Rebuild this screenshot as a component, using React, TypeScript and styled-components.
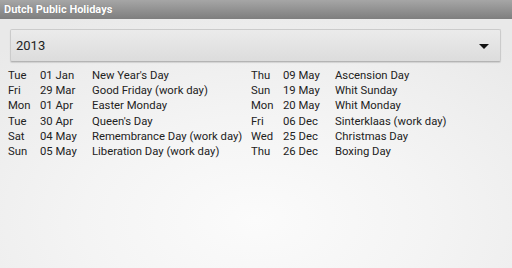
import React from "react";
import styled, { createGlobalStyle } from "styled-components";

const Global = createGlobalStyle`
  html, body { margin: 0; padding: 0; }
  body {
    width: 512px;
    height: 268px;
    overflow: hidden;
    font-family: Roboto, "Liberation Sans", sans-serif;
  }
`;

const Screen = styled.div`
  width: 512px;
  height: 268px;
  display: flex;
  flex-direction: column;
  background: radial-gradient(ellipse 75% 85% at 50% 82%, #fbfbfb 0%, #f4f4f4 45%, #e9e9e9 100%);
`;

const TitleBar = styled.div`
  height: 19px;
  flex: none;
  background: linear-gradient(#a6a6a6, #7e7e7e);
  color: #fff;
  font-weight: bold;
  font-size: 11px;
  line-height: 19px;
  padding-left: 4px;
  text-shadow: 0 0 1px rgba(0,0,0,0.25);
`;

const Spinner = styled.div`
  margin: 10px 11px 0 10px;
  height: 31px;
  border: 1px solid #cbcbcb;
  border-bottom-color: #b4b4b4;
  border-radius: 2px;
  background: linear-gradient(#ebebeb, #dcdcdc);
  box-shadow: 0 1px 1px rgba(0,0,0,0.12);
  display: flex;
  align-items: center;
  justify-content: space-between;
  padding: 0 11px 0 5px;
`;

const SpinnerText = styled.span`
  font-size: 13px;
  color: #222;
`;

const Arrow = styled.span`
  width: 0;
  height: 0;
  border-left: 5px solid transparent;
  border-right: 5px solid transparent;
  border-top: 5px solid #111;
  margin-top: 1px;
`;

const List = styled.div`
  display: grid;
  grid-template-columns: 32px 52px 159px 32px 52px auto;
  grid-auto-rows: 15.2px;
  padding: 6px 0 0 8px;
  font-size: 11.3px;
  line-height: 15px;
  color: #222;
`;

const Cell = styled.span`
  white-space: nowrap;
`;

const left = [
  ["Tue", "01 Jan", "New Year's Day"],
  ["Fri", "29 Mar", "Good Friday (work day)"],
  ["Mon", "01 Apr", "Easter Monday"],
  ["Tue", "30 Apr", "Queen's Day"],
  ["Sat", "04 May", "Remembrance Day (work day)"],
  ["Sun", "05 May", "Liberation Day (work day)"],
];
const right = [
  ["Thu", "09 May", "Ascension Day"],
  ["Sun", "19 May", "Whit Sunday"],
  ["Mon", "20 May", "Whit Monday"],
  ["Fri", "06 Dec", "Sinterklaas (work day)"],
  ["Wed", "25 Dec", "Christmas Day"],
  ["Thu", "26 Dec", "Boxing Day"],
];

export default function App() {
  return (
    <>
      <Global />
      <Screen>
        <TitleBar>Dutch Public Holidays</TitleBar>
        <Spinner>
          <SpinnerText>2013</SpinnerText>
          <Arrow />
        </Spinner>
        <List>
          {left.map((row, i) => (
            <React.Fragment key={i}>
              {[...row, ...right[i]].map((c, j) => (
                <Cell key={j}>{c}</Cell>
              ))}
            </React.Fragment>
          ))}
        </List>
      </Screen>
    </>
  );
}
